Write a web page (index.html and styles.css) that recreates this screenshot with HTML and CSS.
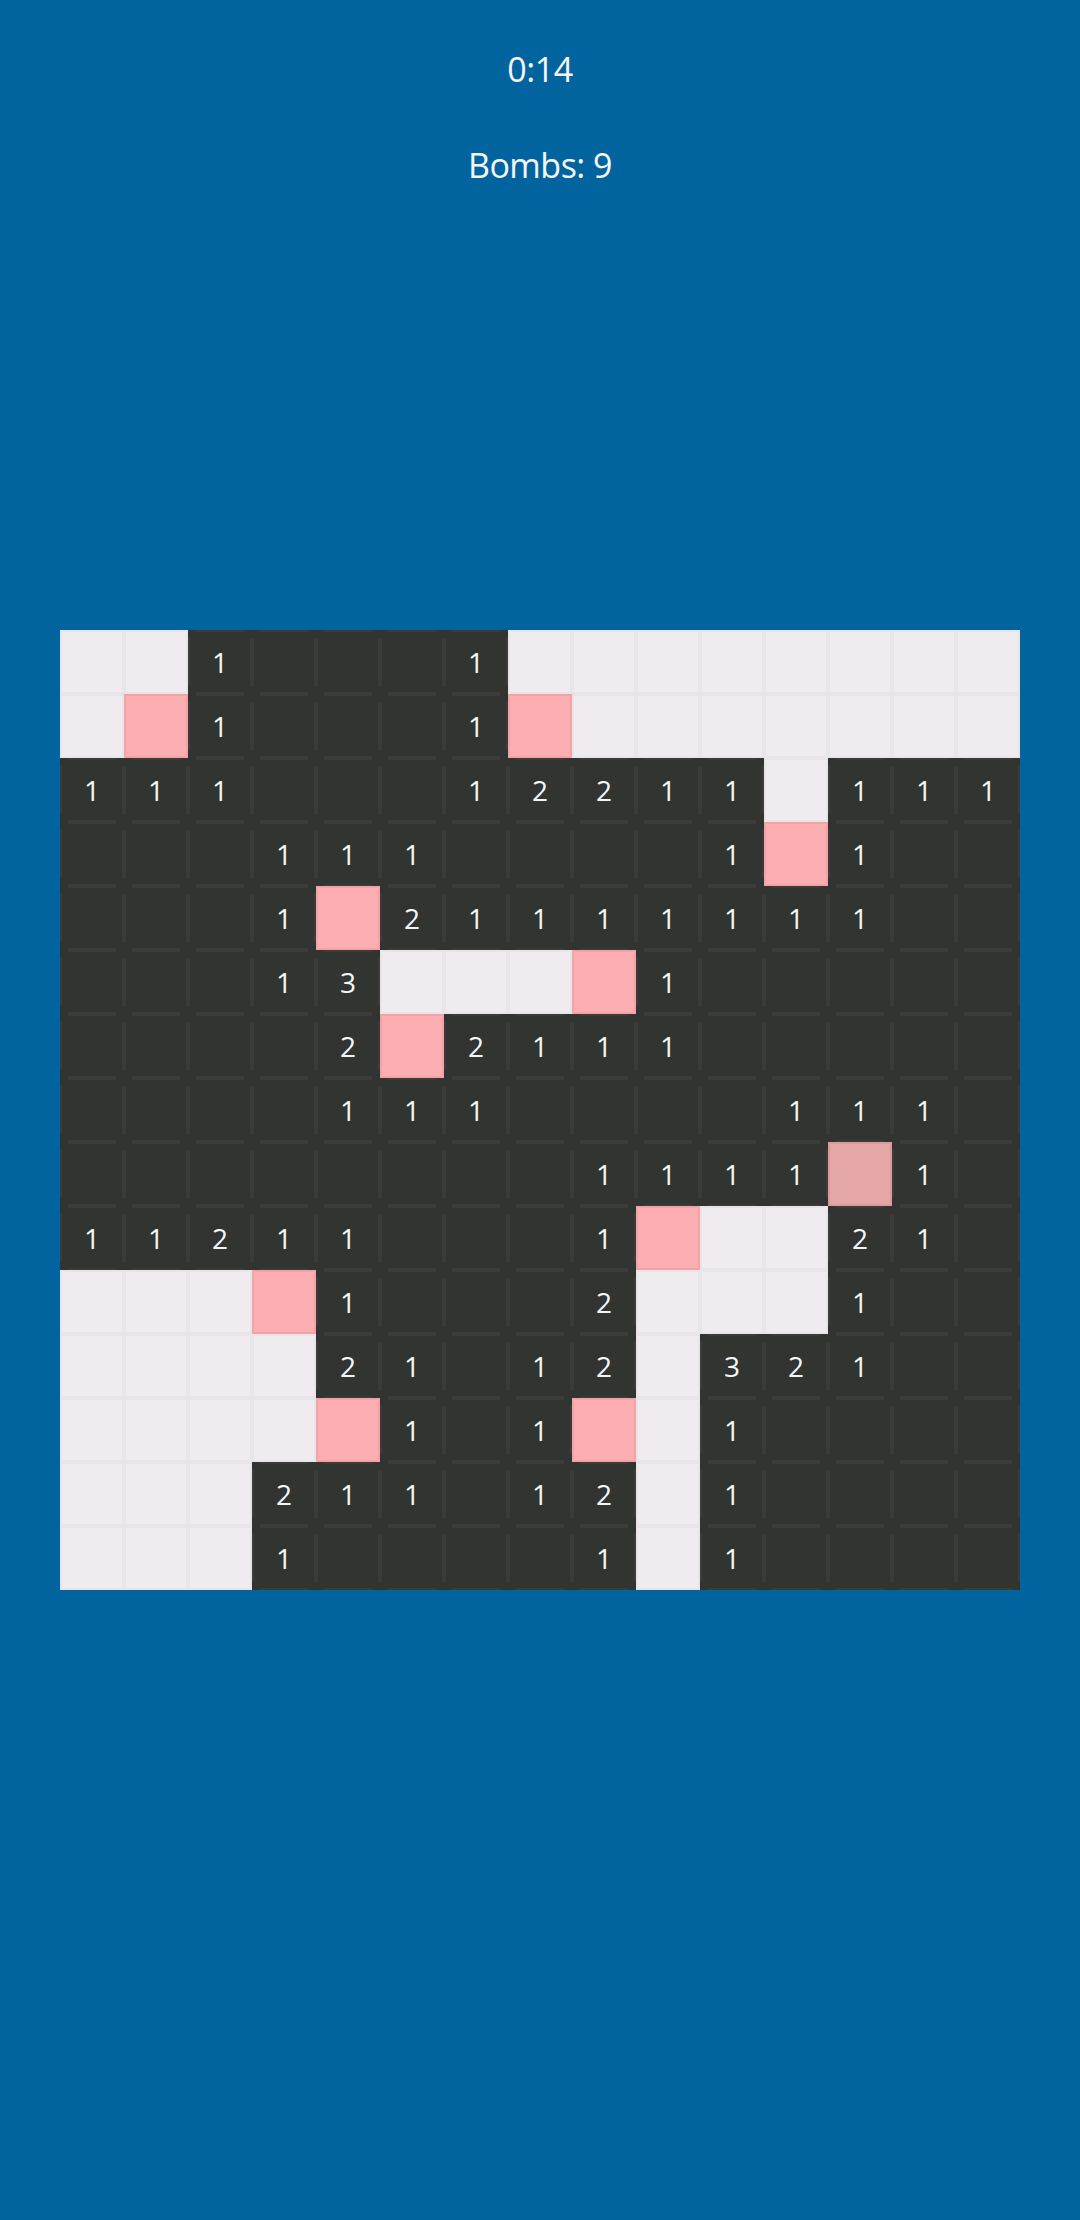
FILE: index.html
```html
<!DOCTYPE html>
<html lang="en">
<head>
<meta charset="utf-8">
<title>Minesweeper</title>
<link rel="stylesheet" href="styles.css">
</head>
<body>
<main class="app">
  <header class="status">
    <div class="timer">0:14</div>
    <div class="bombs">Bombs: 9</div>
  </header>
  <section class="board">
    <!-- row 0 -->
    <div class="c l"></div><div class="c l"></div><div class="c d">1</div><div class="c d"></div><div class="c d"></div><div class="c d"></div><div class="c d">1</div><div class="c l"></div><div class="c l"></div><div class="c l"></div><div class="c l"></div><div class="c l"></div><div class="c l"></div><div class="c l"></div><div class="c l"></div>
    <!-- row 1 -->
    <div class="c l"></div><div class="c f"></div><div class="c d">1</div><div class="c d"></div><div class="c d"></div><div class="c d"></div><div class="c d">1</div><div class="c f"></div><div class="c l"></div><div class="c l"></div><div class="c l"></div><div class="c l"></div><div class="c l"></div><div class="c l"></div><div class="c l"></div>
    <!-- row 2 -->
    <div class="c d">1</div><div class="c d">1</div><div class="c d">1</div><div class="c d"></div><div class="c d"></div><div class="c d"></div><div class="c d">1</div><div class="c d">2</div><div class="c d">2</div><div class="c d">1</div><div class="c d">1</div><div class="c l"></div><div class="c d">1</div><div class="c d">1</div><div class="c d">1</div>
    <!-- row 3 -->
    <div class="c d"></div><div class="c d"></div><div class="c d"></div><div class="c d">1</div><div class="c d">1</div><div class="c d">1</div><div class="c d"></div><div class="c d"></div><div class="c d"></div><div class="c d"></div><div class="c d">1</div><div class="c f"></div><div class="c d">1</div><div class="c d"></div><div class="c d"></div>
    <!-- row 4 -->
    <div class="c d"></div><div class="c d"></div><div class="c d"></div><div class="c d">1</div><div class="c f"></div><div class="c d">2</div><div class="c d">1</div><div class="c d">1</div><div class="c d">1</div><div class="c d">1</div><div class="c d">1</div><div class="c d">1</div><div class="c d">1</div><div class="c d"></div><div class="c d"></div>
    <!-- row 5 -->
    <div class="c d"></div><div class="c d"></div><div class="c d"></div><div class="c d">1</div><div class="c d">3</div><div class="c l"></div><div class="c l"></div><div class="c l"></div><div class="c f"></div><div class="c d">1</div><div class="c d"></div><div class="c d"></div><div class="c d"></div><div class="c d"></div><div class="c d"></div>
    <!-- row 6 -->
    <div class="c d"></div><div class="c d"></div><div class="c d"></div><div class="c d"></div><div class="c d">2</div><div class="c f"></div><div class="c d">2</div><div class="c d">1</div><div class="c d">1</div><div class="c d">1</div><div class="c d"></div><div class="c d"></div><div class="c d"></div><div class="c d"></div><div class="c d"></div>
    <!-- row 7 -->
    <div class="c d"></div><div class="c d"></div><div class="c d"></div><div class="c d"></div><div class="c d">1</div><div class="c d">1</div><div class="c d">1</div><div class="c d"></div><div class="c d"></div><div class="c d"></div><div class="c d"></div><div class="c d">1</div><div class="c d">1</div><div class="c d">1</div><div class="c d"></div>
    <!-- row 8 -->
    <div class="c d"></div><div class="c d"></div><div class="c d"></div><div class="c d"></div><div class="c d"></div><div class="c d"></div><div class="c d"></div><div class="c d"></div><div class="c d">1</div><div class="c d">1</div><div class="c d">1</div><div class="c d">1</div><div class="c h"></div><div class="c d">1</div><div class="c d"></div>
    <!-- row 9 -->
    <div class="c d">1</div><div class="c d">1</div><div class="c d">2</div><div class="c d">1</div><div class="c d">1</div><div class="c d"></div><div class="c d"></div><div class="c d"></div><div class="c d">1</div><div class="c f"></div><div class="c l"></div><div class="c l"></div><div class="c d">2</div><div class="c d">1</div><div class="c d"></div>
    <!-- row 10 -->
    <div class="c l"></div><div class="c l"></div><div class="c l"></div><div class="c f"></div><div class="c d">1</div><div class="c d"></div><div class="c d"></div><div class="c d"></div><div class="c d">2</div><div class="c l"></div><div class="c l"></div><div class="c l"></div><div class="c d">1</div><div class="c d"></div><div class="c d"></div>
    <!-- row 11 -->
    <div class="c l"></div><div class="c l"></div><div class="c l"></div><div class="c l"></div><div class="c d">2</div><div class="c d">1</div><div class="c d"></div><div class="c d">1</div><div class="c d">2</div><div class="c l"></div><div class="c d">3</div><div class="c d">2</div><div class="c d">1</div><div class="c d"></div><div class="c d"></div>
    <!-- row 12 -->
    <div class="c l"></div><div class="c l"></div><div class="c l"></div><div class="c l"></div><div class="c f"></div><div class="c d">1</div><div class="c d"></div><div class="c d">1</div><div class="c f"></div><div class="c l"></div><div class="c d">1</div><div class="c d"></div><div class="c d"></div><div class="c d"></div><div class="c d"></div>
    <!-- row 13 -->
    <div class="c l"></div><div class="c l"></div><div class="c l"></div><div class="c d">2</div><div class="c d">1</div><div class="c d">1</div><div class="c d"></div><div class="c d">1</div><div class="c d">2</div><div class="c l"></div><div class="c d">1</div><div class="c d"></div><div class="c d"></div><div class="c d"></div><div class="c d"></div>
    <!-- row 14 -->
    <div class="c l"></div><div class="c l"></div><div class="c l"></div><div class="c d">1</div><div class="c d"></div><div class="c d"></div><div class="c d"></div><div class="c d"></div><div class="c d">1</div><div class="c l"></div><div class="c d">1</div><div class="c d"></div><div class="c d"></div><div class="c d"></div><div class="c d"></div>
  </section>
</main>
</body>
</html>
```
FILE: styles.css
```css
html, body {
  margin: 0;
  padding: 0;
  background: #01649f;
}

body {
  width: 1080px;
  min-height: 2220px;
  font-family: "Open Sans", "Noto Sans", "Liberation Sans", sans-serif;
  color: #f4f6f8;
}

.app {
  display: flex;
  flex-direction: column;
  align-items: center;
}

.status {
  display: flex;
  flex-direction: column;
  align-items: center;
  padding-top: 44px;
  gap: 46px;
}

.timer,
.bombs {
  font-size: 34px;
  line-height: 50px;
  font-weight: 400;
  letter-spacing: -0.5px;
}

.board {
  margin-top: 440px;
  display: grid;
  grid-template-columns: repeat(15, 64px);
  grid-auto-rows: 64px;
  width: 960px;
  background: #323432;
}

.c {
  position: relative;
  display: flex;
  align-items: center;
  justify-content: center;
  font-size: 28px;
  line-height: 1;
  color: #f6f6f6;
  box-sizing: border-box;
}

.d {
  background: #323432;
}

.d::before,
.d::after {
  content: "";
  position: absolute;
  pointer-events: none;
}

.d::before {
  left: 8px;
  right: 8px;
  top: 0;
  bottom: 0;
  border-top: 2px solid #3b3b3a;
  border-bottom: 2px solid #3b3b3a;
}

.d::after {
  top: 8px;
  bottom: 8px;
  left: 0;
  right: 0;
  border-left: 2px solid #3b3b3a;
  border-right: 2px solid #3b3b3a;
}

.l {
  background: #efebee;
  box-shadow: inset 0 0 0 2px #e7e5e8;
}

.f {
  background: #fdaeb3;
  box-shadow: inset 0 0 0 2px #f5a2a7;
}

.h {
  background: #e5a6a8;
  box-shadow: inset 0 0 0 2px #dd9a9d;
}
```
